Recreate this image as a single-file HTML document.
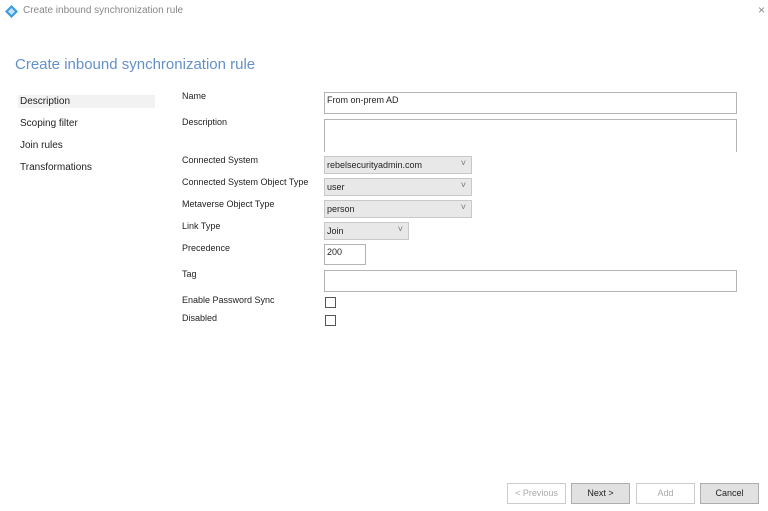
<!DOCTYPE html>
<html><head><style>
body{margin:0;width:768px;height:511px;background:#fff;font-family:"Liberation Sans",sans-serif;position:relative;overflow:hidden;color:#222}
.a{position:absolute;white-space:nowrap}
.l{font-size:9px;color:#222}
.s{font-size:10px;color:#222}
.box{position:absolute;border:1px solid #b4b4b4;background:#fff;box-sizing:border-box;font-size:9px;padding:2px 2px;}
.cb{position:absolute;background:#e8e8e8;border:1px solid #c8c8c8;box-sizing:border-box;font-size:9px;padding:3px 2px}
.cb:after{content:"˅";position:absolute;right:5px;top:1px;font-size:9px;color:#777}
.btn{position:absolute;top:483px;height:21px;width:59px;box-sizing:border-box;border:1px solid #ccc;font-size:9px;text-align:center;line-height:19px;color:#aaa;background:#fff}
.chk{position:absolute;width:11px;height:11px;border:1px solid #555;box-sizing:border-box;background:#fff}
</style></head><body>
<svg class="a" style="left:4px;top:4px" width="15" height="15" viewBox="0 0 15 15"><path d="M7.5 1L14 7.5 7.5 14 1 7.5Z" fill="#3a9be0"/><path d="M7.5 4L11 7.5 7.5 11 4 7.5Z" fill="#bfe3fb"/></svg>
<div class="a" style="left:23px;top:5px;font-size:10px;color:#888">Create inbound synchronization rule</div>
<div class="a" style="left:758px;top:3px;font-size:12px;color:#888">×</div>
<div class="a" style="left:15px;top:56px;font-size:15px;color:#6490c8">Create inbound synchronization rule</div>
<div class="a" style="left:18px;top:95px;width:137px;height:13px;background:#f2f2f2"></div>
<div class="a s" style="left:20px;top:96px">Description</div>
<div class="a s" style="left:20px;top:118px">Scoping filter</div>
<div class="a s" style="left:20px;top:140px">Join rules</div>
<div class="a s" style="left:20px;top:162px">Transformations</div>
<div class="a l" style="left:182px;top:91px">Name</div>
<div class="a l" style="left:182px;top:117px">Description</div>
<div class="a l" style="left:182px;top:155px">Connected System</div>
<div class="a l" style="left:182px;top:177px">Connected System Object Type</div>
<div class="a l" style="left:182px;top:199px">Metaverse Object Type</div>
<div class="a l" style="left:182px;top:221px">Link Type</div>
<div class="a l" style="left:182px;top:243px">Precedence</div>
<div class="a l" style="left:182px;top:269px">Tag</div>
<div class="a l" style="left:182px;top:295px">Enable Password Sync</div>
<div class="a l" style="left:182px;top:313px">Disabled</div>
<div class="box" style="left:324px;top:92px;width:413px;height:22px">From on-prem AD</div>
<div class="box" style="left:324px;top:119px;width:413px;height:33px;border-bottom:none"></div>
<div class="cb" style="left:324px;top:156px;width:148px;height:18px">rebelsecurityadmin.com</div>
<div class="cb" style="left:324px;top:178px;width:148px;height:18px">user</div>
<div class="cb" style="left:324px;top:200px;width:148px;height:18px">person</div>
<div class="cb" style="left:324px;top:222px;width:85px;height:18px">Join</div>
<div class="box" style="left:324px;top:244px;width:42px;height:21px">200</div>
<div class="box" style="left:324px;top:270px;width:413px;height:22px"></div>
<div class="chk" style="left:325px;top:297px"></div>
<div class="chk" style="left:325px;top:315px"></div>
<div class="btn" style="left:507px">&lt; Previous</div>
<div class="btn" style="left:571px;background:#e1e1e1;border-color:#adadad;color:#222">Next &gt;</div>
<div class="btn" style="left:636px">Add</div>
<div class="btn" style="left:700px;background:#e1e1e1;border-color:#adadad;color:#222">Cancel</div>
</body></html>
